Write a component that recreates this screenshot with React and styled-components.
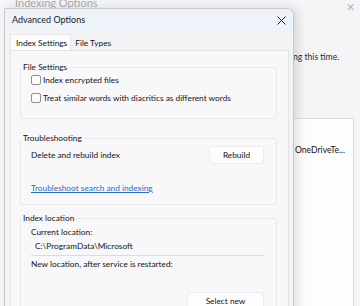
import styled, { createGlobalStyle } from 'styled-components';

const GlobalStyle = createGlobalStyle`
  html, body {
    margin: 0;
    padding: 0;
    background: #f4f4f6;
    font-family: Lato, "Noto Sans", sans-serif;
    font-size: 8.3px;
    line-height: 12px;
    color: #141414;
    overflow: hidden;
  }
`;

const Desktop = styled.div`
  position: relative;
  width: 360px;
  height: 306px;
  overflow: hidden;
  background: #f4f4f6;
`;

// the Indexing Options window sitting behind the dialog
const BackWindow = styled.div`
  position: absolute;
  inset: -7px 0 0 0;
  background: #f5f5f7;
`;

const BackTitle = styled.div`
  display: flex;
  align-items: center;
  justify-content: space-between;
  height: 20px;
  padding: 0 5px 0 15px;
  color: #a9a9ad;
  font-size: 11px;
`;

const BackClose = styled.span`
  color: #b5b5b8;
  font-size: 11px;
  margin-top: 8px;
`;

const BackText = styled.div`
  position: absolute;
  left: 293px;
  top: 58px;
  color: #2b2b2b;
  font-size: 8.6px;
`;

const BackList = styled.div`
  position: absolute;
  left: 292px;
  top: 125px;
  width: 62px;
  height: 200px;
  background: #fdfdfd;
  border: 1px solid #dcdcde;
  padding: 25px 0 0 2px;
  box-sizing: border-box;
  white-space: nowrap;
  font-size: 8.6px;
`;

const Dialog = styled.div`
  position: absolute;
  left: 4px;
  top: 8px;
  width: 288px;
  height: 310px;
  background: #f3f3f5;
  border: 1px solid #c9c9cc;
  border-top-right-radius: 7px;
  box-shadow: 4px 0 10px rgba(0, 0, 0, 0.12);
  display: flex;
  flex-direction: column;
`;

const TitleBar = styled.div`
  display: flex;
  align-items: center;
  justify-content: space-between;
  height: 22px;
  padding: 0 7px 0 7px;
  background: #eef2f9;
  border-top-right-radius: 7px;
  font-size: 9px;
  color: #1a1a1a;
`;

const Tabs = styled.div`
  display: flex;
  align-items: flex-end;
  height: 19px;
  padding-left: 5px;
`;

const Tab = styled.div`
  height: ${p => (p.active ? '15px' : '14px')};
  padding: ${p => (p.active ? '0 3px 0 5px' : '0 3px 0 3px')};
  display: flex;
  align-items: center;
  background: ${p => (p.active ? '#fcfcfd' : 'transparent')};
  border: 1px solid ${p => (p.active ? '#e6e6e9' : 'transparent')};
  border-bottom: none;
`;

const Panel = styled.div`
  flex: 1;
  margin: 0 4px 0 5px;
  background: #f8f8fa;
  border: 1px solid #e3e3e6;
  padding: 10px 11px 0 9px;
  display: flex;
  flex-direction: column;
`;

const Group = styled.fieldset`
  margin: ${p => p.mt || 0}px 0 0 0;
  padding: 0 12px ${p => p.pb || 0}px 10px;
  border: 1px solid #e8e8eb;
  border-radius: 2px;
  display: flex;
  flex-direction: column;
  legend {
    padding: 0 2px;
    margin-left: -10px;
  }
`;

const CheckRow = styled.label`
  display: flex;
  align-items: center;
  gap: 2px;
  margin-top: ${p => p.mt}px;
`;

const Box = styled.span`
  width: 8px;
  height: 8px;
  border: 1px solid #8f8f93;
  border-radius: 2px;
  background: #fbfbfc;
`;

const Row = styled.div`
  display: flex;
  align-items: center;
  justify-content: space-between;
  margin-top: ${p => p.mt || 0}px;
`;

const Line = styled.div`
  margin-top: ${p => p.mt || 0}px;
`;

const Button = styled.div`
  width: ${p => p.w}px;
  height: 18px;
  display: flex;
  align-items: center;
  justify-content: center;
  background: #fdfdfe;
  border: 1px solid #ececef;
  border-radius: 3px;
  box-sizing: border-box;
`;

const Link = styled.a`
  color: #2a6ac8;
  text-decoration: underline;
  margin-top: 18px;
`;

const Path = styled.div`
  margin-top: 2px;
  padding: 0 0 3px 4px;
  border-bottom: 1px solid #dcdcdf;
`;

export default function App() {
  return (
    <Desktop>
      <GlobalStyle />
      <BackWindow>
        <BackTitle>
          <span>Indexing Options</span>
          <BackClose>✕</BackClose>
        </BackTitle>
        <BackText>ng this time.</BackText>
        <BackList>OneDriveTe...</BackList>
      </BackWindow>
      <Dialog>
        <TitleBar>
          <span>Advanced Options</span>
          <svg width="9" height="9" viewBox="0 0 9 9">
            <path d="M0.5 0.5L8.5 8.5M8.5 0.5L0.5 8.5" stroke="#222" strokeWidth="1" />
          </svg>
        </TitleBar>
        <Tabs>
          <Tab active>Index Settings</Tab>
          <Tab>File Types</Tab>
        </Tabs>
        <Panel>
          <Group pb={14}>
            <legend>File Settings</legend>
            <CheckRow mt={1}><Box />Index encrypted files</CheckRow>
            <CheckRow mt={6}><Box />Treat similar words with diacritics as different words</CheckRow>
          </Group>
          <Group mt={13} pb={10}>
            <legend>Troubleshooting</legend>
            <Row mt={2}>
              <span>Delete and rebuild index</span>
              <Button w={55}>Rebuild</Button>
            </Row>
            <Link>Troubleshoot search and indexing</Link>
          </Group>
          <Group mt={7}>
            <legend>Index location</legend>
            <Line mt={2}>Current location:</Line>
            <Path>C:\ProgramData\Microsoft</Path>
            <Line mt={2}>New location, after service is restarted:</Line>
            <Row mt={22}>
              <span />
              <Button w={77}>Select new</Button>
            </Row>
          </Group>
        </Panel>
      </Dialog>
    </Desktop>
  );
}
